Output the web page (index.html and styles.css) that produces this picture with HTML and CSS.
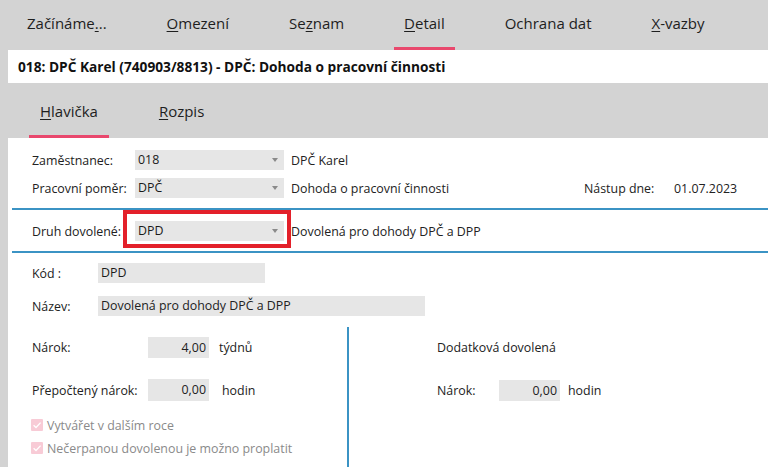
FILE: index.html
```html
<!DOCTYPE html>
<html lang="cs">
<head>
<meta charset="utf-8">
<title>Detail</title>
<link rel="stylesheet" href="styles.css">
</head>
<body>
<div class="nav">
  <div class="tab">Začínáme<u>.</u>..</div>
  <div class="tab"><u>O</u>mezení</div>
  <div class="tab">Se<u>z</u>nam</div>
  <div class="tab active"><u>D</u>etail</div>
  <div class="tab">Ochrana dat</div>
  <div class="tab"><u>X</u>-vazby</div>
</div>
<div class="main">
  <div class="title">018: DPČ Karel (740903/8813) - DPČ: Dohoda o pracovní činnosti</div>
  <div class="subtabs">
    <div class="subtab active"><u>H</u>lavička</div>
    <div class="subtab"><u>R</u>ozpis</div>
  </div>
  <div class="content">
    <div class="row first">
      <div class="lbl">Zaměstnanec:</div>
      <div class="select">018</div>
      <div class="desc">DPČ Karel</div>
    </div>
    <div class="row second">
      <div class="lbl">Pracovní poměr:</div>
      <div class="select">DPČ</div>
      <div class="desc grow">Dohoda o pracovní činnosti</div>
      <div class="start-lbl">Nástup dne:</div>
      <div class="start-val">01.07.2023</div>
    </div>
    <div class="sep sep1"></div>
    <div class="row druh">
      <div class="lbl">Druh dovolené:</div>
      <div class="select">DPD<span class="hl"></span></div>
      <div class="desc">Dovolená pro dohody DPČ a DPP</div>
    </div>
    <div class="sep"></div>
    <div class="row kod">
      <div class="lbl short">Kód :</div>
      <div class="inp w-kod strong">DPD</div>
    </div>
    <div class="row nazev">
      <div class="lbl short">Název:</div>
      <div class="inp w-nazev">Dovolená pro dohody DPČ a DPP</div>
    </div>
    <div class="lower">
      <div class="col-left">
        <div class="row r-narok">
          <div class="lbl mid">Nárok:</div>
          <div class="inp num">4,00</div>
          <div class="unit">týdnů</div>
        </div>
        <div class="row r-prep">
          <div class="lbl mid">Přepočtený nárok:</div>
          <div class="inp num tall">0,00</div>
          <div class="unit wide">hodin</div>
        </div>
        <div class="cb-row cb1">
          <span class="cb"><svg viewBox="0 0 12 12" width="12" height="12"><path d="M2.6 6.2 L5 8.5 L9.6 3.6" fill="none" stroke="#fff" stroke-width="1.3"/></svg></span>
          <span>Vytvářet v dalším roce</span>
        </div>
        <div class="cb-row cb2">
          <span class="cb"><svg viewBox="0 0 12 12" width="12" height="12"><path d="M2.6 6.2 L5 8.5 L9.6 3.6" fill="none" stroke="#fff" stroke-width="1.3"/></svg></span>
          <span>Nečerpanou dovolenou je možno proplatit</span>
        </div>
      </div>
      <div class="col-right">
        <div class="row r-dod">Dodatková dovolená</div>
        <div class="row r-narok2">
          <div class="lbl r">Nárok:</div>
          <div class="inp num">0,00</div>
          <div class="unit narrow">hodin</div>
        </div>
      </div>
    </div>
  </div>
</div>
</body>
</html>
```
FILE: styles.css
```css
html, body {
  margin: 0;
  padding: 0;
}
body {
  width: 768px;
  height: 467px;
  overflow: hidden;
  background: #d3d3d3;
  font-family: "Open Sans", "Noto Sans", "Liberation Sans", sans-serif;
  font-size: 12.4px;
  color: #222;
}
u {
  text-decoration: underline;
  text-decoration-thickness: 1px;
  text-underline-offset: 2px;
}
.nav {
  display: flex;
  gap: 40px;
  height: 50px;
  padding-left: 17px;
  box-sizing: border-box;
}
.tab {
  padding: 13px 10px 3px;
  line-height: 20px;
  font-size: 15px;
  color: #1e1e1e;
  border-bottom: 3px solid transparent;
  white-space: nowrap;
}
.tab.active {
  border-bottom-color: #e9486d;
}
.main {
  margin-left: 8px;
}
.title {
  background: #fff;
  height: 33px;
  line-height: 33px;
  padding-left: 10px;
  font-weight: bold;
  font-size: 13.7px;
  color: #111;
  white-space: nowrap;
}
.subtabs {
  display: flex;
  gap: 39px;
  height: 55px;
  padding-left: 21px;
  box-sizing: border-box;
}
.subtab {
  padding: 19px 11px 5px;
  line-height: 18px;
  font-size: 15px;
  color: #1e1e1e;
  border-bottom: 3px solid transparent;
}
.subtab.active {
  border-bottom-color: #e9486d;
}
.content {
  background: #fff;
  height: 329px;
  display: flex;
  flex-direction: column;
  padding-top: 12px;
  box-sizing: border-box;
}
.row {
  display: flex;
  align-items: center;
  height: 20px;
  padding-left: 24px;
  white-space: nowrap;
}
.row.second {
  margin-top: 8px;
}
.lbl {
  width: 103px;
  flex: none;
}
.lbl.short {
  width: 66px;
}
.lbl.mid {
  width: 116px;
}
.lbl.r {
  width: 62px;
}
.select {
  position: relative;
  width: 149px;
  height: 20px;
  line-height: 20px;
  background: #e6e6e6;
  padding-left: 3px;
  box-sizing: border-box;
  flex: none;
  font-weight: 500;
  color: #1a1a1a;
}
.select::after {
  content: "";
  position: absolute;
  right: 6px;
  top: 8px;
  border-top: 4px solid #8a8a8a;
  border-left: 3.5px solid transparent;
  border-right: 3.5px solid transparent;
}
.desc {
  margin-left: 7px;
}
.grow {
  flex: 1;
}
.start-lbl {
  width: 90px;
}
.start-val {
  width: 94px;
}
.sep {
  height: 2px;
  background: #3b93c4;
  margin-left: 4px;
  flex: none;
}
.sep1 {
  margin-top: 10px;
}
.row.druh {
  margin: 11px 0 10px;
}
.hl {
  position: absolute;
  left: -12px;
  top: -11px;
  right: -7px;
  bottom: -7px;
  border: 4px solid #e3202a;
}
.inp {
  height: 20px;
  line-height: 20px;
  background: #e6e6e6;
  padding-left: 3px;
  box-sizing: border-box;
  flex: none;
}
.inp.strong {
  font-weight: 500;
  color: #1a1a1a;
}
.w-kod {
  width: 167px;
}
.w-nazev {
  width: 327px;
}
.row.kod {
  margin-top: 10px;
}
.row.nazev {
  margin-top: 13px;
}
.lower {
  flex: 1;
  display: flex;
  margin-top: 11px;
}
.col-left {
  width: 339px;
  padding-top: 10px;
  box-sizing: border-box;
}
.col-right {
  flex: 1;
  border-left: 2px solid #3b93c4;
  padding-top: 10px;
  padding-left: 88px;
}
.col-right .row {
  padding-left: 0;
}
.inp.num {
  width: 61px;
  height: 21px;
  line-height: 21px;
  text-align: right;
  padding: 0 3px 0 0;
}
.inp.num.tall {
  height: 22px;
  line-height: 22px;
}
.r-narok, .r-dod {
  height: 21px;
}
.r-prep {
  height: 22px;
  margin-top: 21px;
}
.r-narok2 {
  height: 21px;
  margin-top: 22px;
}
.unit {
  margin-left: 10px;
}
.unit.wide {
  margin-left: 13px;
}
.unit.narrow {
  margin-left: 8px;
}
.cb-row {
  display: flex;
  align-items: center;
  height: 16px;
  padding-left: 23px;
  color: #8a8a8a;
  white-space: nowrap;
}
.cb1 {
  margin-top: 16px;
}
.cb2 {
  margin-top: 7px;
}
.cb {
  width: 12px;
  height: 12px;
  background: #f8cbd6;
  border-radius: 1px;
  margin-right: 4px;
  display: flex;
}
```
